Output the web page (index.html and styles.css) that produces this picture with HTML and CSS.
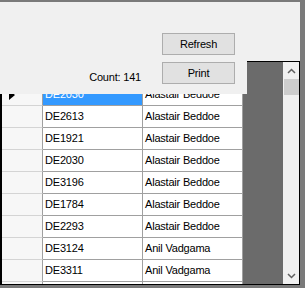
FILE: index.html
```html
<!DOCTYPE html>
<html lang="en">
<head>
    <meta charset="UTF-8">
    <meta name="viewport" content="width=device-width, initial-scale=1.0">
    <title>Bookings</title>
    <link rel="stylesheet" href="styles.css">
</head>
<body>

    <div class="window">
        <div class="grid">
            <div class="grid-body">
                <div class="row header-row">
                    <div class="rh"></div>
                    <div class="cell"></div>
                    <div class="cell"></div>
                </div>
                <div class="row selected">
                    <div class="rh">
                        <svg class="current" width="6" height="10" viewBox="0 0 6 10"><polygon points="0,0 6,5 0,10" fill="#000"/></svg>
                    </div>
                    <div class="cell">DE2030</div>
                    <div class="cell">Alastair Beddoe</div>
                </div>
                <div class="row">
                    <div class="rh"></div>
                    <div class="cell">DE2613</div>
                    <div class="cell">Alastair Beddoe</div>
                </div>
                <div class="row">
                    <div class="rh"></div>
                    <div class="cell">DE1921</div>
                    <div class="cell">Alastair Beddoe</div>
                </div>
                <div class="row">
                    <div class="rh"></div>
                    <div class="cell">DE2030</div>
                    <div class="cell">Alastair Beddoe</div>
                </div>
                <div class="row">
                    <div class="rh"></div>
                    <div class="cell">DE3196</div>
                    <div class="cell">Alastair Beddoe</div>
                </div>
                <div class="row">
                    <div class="rh"></div>
                    <div class="cell">DE1784</div>
                    <div class="cell">Alastair Beddoe</div>
                </div>
                <div class="row">
                    <div class="rh"></div>
                    <div class="cell">DE2293</div>
                    <div class="cell">Alastair Beddoe</div>
                </div>
                <div class="row">
                    <div class="rh"></div>
                    <div class="cell">DE3124</div>
                    <div class="cell">Anil Vadgama</div>
                </div>
                <div class="row">
                    <div class="rh"></div>
                    <div class="cell">DE3311</div>
                    <div class="cell">Anil Vadgama</div>
                </div>
                <div class="row">
                    <div class="rh"></div>
                    <div class="cell"></div>
                    <div class="cell"></div>
                </div>
            </div>

            <div class="vscroll">
                <div class="arrow">
                    <svg width="9" height="6" viewBox="0 0 9 6"><polyline points="1,5 4.5,1.5 8,5" fill="none" stroke="#606060" stroke-width="1.5"/></svg>
                </div>
                <div class="thumb"></div>
                <div class="track"></div>
                <div class="arrow">
                    <svg width="9" height="6" viewBox="0 0 9 6"><polyline points="1,1 4.5,4.5 8,1" fill="none" stroke="#606060" stroke-width="1.5"/></svg>
                </div>
            </div>
        </div>

        <!-- top panel sits over the grid's first rows -->
        <div class="top-panel">
            <span class="count">Count: 141</span>
            <div class="buttons">
                <button type="button">Refresh</button>
                <button type="button">Print</button>
            </div>
        </div>
    </div>

</body>
</html>
```

FILE: styles.css
```css
body {
    margin: 0;
    font-family: "Liberation Sans", Arial, sans-serif;
    font-size: 11px;
    letter-spacing: -0.2px;
    color: #000;
}
.window {
    position: relative;
    width: 305px;
    height: 288px;
    box-sizing: border-box;
    background-color: #f0f0f0;
    border-top: 2px solid #7a7a7a;
    border-right: 5px solid #7a7a7a;
    border-bottom: 3px solid #7a7a7a;
    overflow: hidden;
}
.grid {
    display: flex;
    margin-top: 59px;
    height: 224px;
    box-sizing: border-box;
    border-top: 1px solid #000;
    border-bottom: 1px solid #000;
    border-left: 2px solid #000;
    border-right: 1px solid #000;
    overflow: hidden;
}
.grid-body {
    flex: 1;
    background-color: #6b6b6b;
    overflow: hidden;
}
.row {
    display: flex;
    height: 22px;
}
.rh {
    width: 41px;
    box-sizing: border-box;
    background-color: #f7f7f7;
    border-right: 1px solid #a0a0a0;
    border-bottom: 1px solid #d4d4d4;
    display: flex;
    align-items: center;
    padding-left: 7px;
}
.cell {
    width: 100px;
    box-sizing: border-box;
    background-color: #fff;
    border-right: 1px solid #a0a0a0;
    border-bottom: 1px solid #a0a0a0;
    padding-left: 2px;
    line-height: 21px;
    white-space: nowrap;
    overflow: hidden;
}
.selected .cell:nth-child(2) {
    background-color: #3399ff;
    color: #fff;
}
.vscroll {
    width: 16px;
    display: flex;
    flex-direction: column;
    background-color: #f0f0f0;
}
.arrow {
    height: 17px;
    display: flex;
    align-items: center;
    justify-content: center;
}
.thumb {
    height: 16px;
    margin: 0 0 0 1px;
    background-color: #cdcdcd;
}
.track {
    flex: 1;
}
.top-panel {
    position: absolute;
    top: 0;
    left: 0;
    width: 247px;
    height: 92px;
    box-sizing: border-box;
    background-color: #f0f0f0;
    display: flex;
    justify-content: flex-end;
    align-items: flex-end;
    padding: 0 12px 10px 0;
}
.count {
    line-height: 13px;
    margin-right: 21px;
}
.buttons {
    display: flex;
    flex-direction: column;
    gap: 7px;
}
button {
    width: 73px;
    height: 22px;
    padding: 0;
    background-color: #e1e1e1;
    border: 1px solid #adadad;
    border-radius: 0;
    font-family: "Liberation Sans", Arial, sans-serif;
    font-size: 11px;
    letter-spacing: -0.2px;
    color: #000;
}
```
